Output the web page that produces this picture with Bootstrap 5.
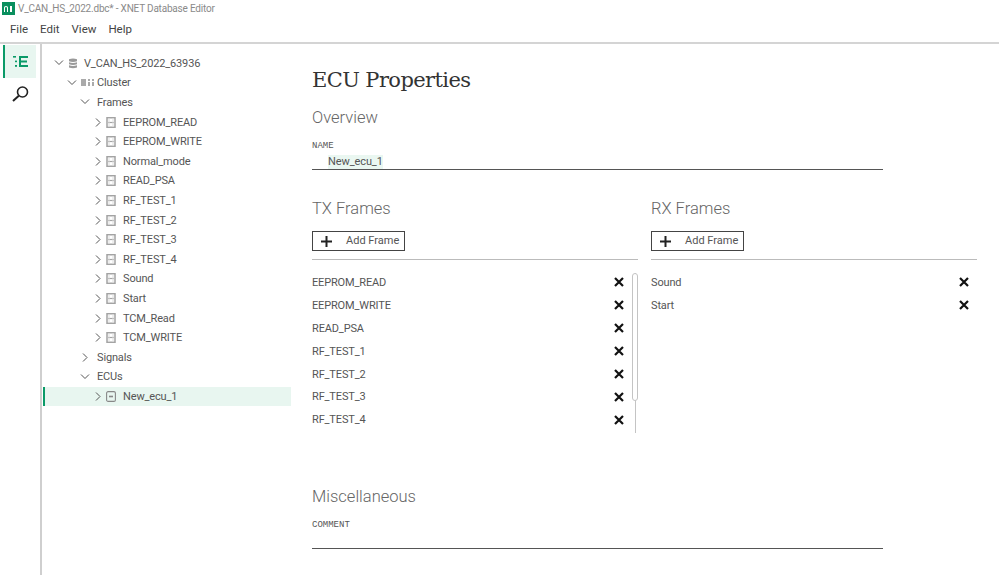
<!DOCTYPE html>
<html lang="en">
<head>
<meta charset="utf-8">
<title>XNET Database Editor</title>
<link href="https://cdn.jsdelivr.net/npm/bootstrap@5.3.0/dist/css/bootstrap.min.css" rel="stylesheet">
<style>
html,body{height:575px;overflow:hidden;background:#fff}
body{font-family:"Roboto","Noto Sans",sans-serif;font-size:12px;color:#333;line-height:1}
.titlebar{height:16px;padding-left:2px;color:#8a8a8a;font-size:10px;letter-spacing:-.2px;gap:3px}
.titlebar span{padding-top:1px}
.ni-logo{width:13px;height:13px;background:#0a8f5e}
.menubar{border-bottom:2px solid #d4d4d4;height:28px;padding:2px 0 0 10px;gap:12px;font-size:11.5px;color:#444}
.workspace{height:531px}
.rail{width:42px;border-right:2px solid #cfcfcf;padding:1px 0 0 3px}
.railtab{width:33px;height:33px;border-left:2px solid #0a9a68}
.railtab.on{background:#e8f6f0}
.railtab.off{border-left-color:transparent;padding-bottom:2px}
.treepane{width:249px;padding:9.5px 0 0 1px}
.tree-row{height:19.6px;color:#555;font-size:11px;letter-spacing:-.15px;white-space:nowrap}
.tree-row.sel{background:#e8f6f0;box-shadow:inset 2px 0 0 #0a9a68}
.caret{width:10px;flex:none;margin-right:4px}
.lv0{padding-left:11px}.lv1{padding-left:24px}.lv2{padding-left:37px}.lv3{padding-left:50px}
.lv3 .caret{margin-right:3px}
.ico{flex:none;margin-right:7px}
.ico.wide{margin-right:3px}
.lv0 .ico{margin-right:6px}
.lv2 .caret{margin-right:7px}
.main{padding:0 0 0 21px;width:708px}
.page-h{font-family:"DejaVu Serif","Liberation Serif",serif;font-size:21px;letter-spacing:-.6px;color:#333;margin:23px 0 0;line-height:27px;font-weight:400}
.sec-h{font-family:"Roboto",sans-serif;font-weight:300;font-size:16.5px;color:#666;line-height:22px;margin:0}
.sec-first{margin-top:13px}
.fieldlabel{font-family:"Liberation Mono",monospace;font-size:9px;color:#555;line-height:10px}
.lbl-name{margin-top:12px}
.lbl-comment{margin-top:12px}
.namefield{width:571px;border-bottom:1.5px solid #555;height:15px;padding-left:16px;margin-top:4px;font-size:11px;letter-spacing:-.1px}
.namefield span{background:#eaf7f1;display:inline-block;line-height:14px;color:#555}
.cols{gap:13px;width:666px;margin-top:28px}
.framecol{width:326px}
.addbtn{width:93px;height:20px;border:1px solid #444;border-radius:0;background:#fff;padding:0 0 0 8px;font-size:11px;color:#555;margin-top:11px;gap:14px}
.rule{border-top:1px solid #bbb;margin-top:8px;height:0}
.flist{margin-top:11px;height:164px;position:relative}
.frow{height:22.9px;padding-right:14px;color:#555;font-size:11px;letter-spacing:-.15px}
.rxlist .frow{padding-right:8px}
.sbar{position:absolute;right:0;top:2px;width:6px;height:128px;border:1px solid #c4c4c4;border-radius:3px;background:#fff}
.strack{position:absolute;right:2.5px;top:2px;width:1px;height:160px;background:#c4c4c4}
.misc{margin-top:51px}
.commentline{width:571px;border-bottom:1px solid #555;height:19px}
</style>
</head>
<body>
<div class="titlebar d-flex align-items-center">
  <div class="ni-logo d-flex align-items-center justify-content-center">
    <svg width="9" height="7" viewBox="0 0 9 7"><path d="M0 7V2.5Q0 1 2 1Q4 1 4 2.5V7H3V3Q3 2 2 2Q1 2 1 3V7ZM6 1H8V7H6Z" fill="#fff"/></svg>
  </div>
  <span>V_CAN_HS_2022.dbc* - XNET Database Editor</span>
</div>
<div class="menubar d-flex align-items-center"><span>File</span><span>Edit</span><span>View</span><span>Help</span></div>
<div class="workspace d-flex">
  <div class="rail">
    <div class="railtab on d-flex align-items-center justify-content-center">
      <svg width="15" height="11" viewBox="0 0 15 11" fill="#0a9a68"><rect x="0" y="0" width="3" height="1.6"/><rect x="2" y="4.6" width="2" height="1.6"/><rect x="2" y="9" width="2" height="1.8"/><path d="M6 0H15V2H8V4.5H14V6.5H8V9H15V11H6Z"/></svg>
    </div>
    <div class="railtab off d-flex align-items-center justify-content-center">
      <svg width="17" height="16" viewBox="0 0 17 16" fill="none" stroke="#222" stroke-width="1.6"><circle cx="10.5" cy="6" r="5"/><path d="M6.8 9.8L1 15" stroke-width="2"/></svg>
    </div>
  </div>
  <div class="treepane" id="tree"></div>
  <div class="main">
    <h1 class="page-h">ECU Properties</h1>
    <h2 class="sec-h sec-first">Overview</h2>
    <div class="fieldlabel lbl-name">NAME</div>
    <div class="namefield"><span>New_ecu_1</span></div>
    <div class="cols d-flex">
      <div class="framecol">
        <h2 class="sec-h">TX Frames</h2>
        <button class="addbtn btn d-flex align-items-center" type="button"><svg width="11" height="11" viewBox="0 0 11 11"><path d="M5.5 0V11M0 5.5H11" stroke="#222" stroke-width="2"/></svg>Add Frame</button>
        <div class="rule"></div>
        <div class="flist" id="tx"><div class="strack"></div><div class="sbar"></div></div>
      </div>
      <div class="framecol">
        <h2 class="sec-h">RX Frames</h2>
        <button class="addbtn btn d-flex align-items-center" type="button"><svg width="11" height="11" viewBox="0 0 11 11"><path d="M5.5 0V11M0 5.5H11" stroke="#222" stroke-width="2"/></svg>Add Frame</button>
        <div class="rule"></div>
        <div class="flist rxlist" id="rx"></div>
      </div>
    </div>
    <h2 class="sec-h misc">Miscellaneous</h2>
    <div class="fieldlabel lbl-comment">COMMENT</div>
    <div class="commentline"></div>
  </div>
</div>
<script>
const open='<svg class="caret" width="9" height="6" viewBox="0 0 9 6" fill="none" stroke="#555" stroke-width="1"><path d="M.5 .5L4.5 4.5L8.5 .5"/></svg>';
const shut='<svg class="caret" width="9" height="9" viewBox="0 0 10 9" fill="none" stroke="#555" stroke-width="1"><path d="M3 .5L7 4.5L3 8.5"/></svg>';
const film='<svg class="ico" width="10" height="11" viewBox="0 0 10 11" fill="none" stroke="#a3a3a3"><rect x="1" y=".75" width="8" height="9.5" stroke-width="1.5"/><path d="M2 5.5H8" stroke-width="1.2"/><path d="M3 1V10M7 1V10" stroke="#ddd" stroke-width="1"/></svg>';
const db='<svg class="ico" width="10" height="11" viewBox="0 0 10 11" fill="#999"><path d="M1 1.2Q5 -.4 9 1.2V3.2Q5 4.6 1 3.2ZM1 4.2Q5 5.6 9 4.2V6.2Q5 7.6 1 6.2ZM1 7.2Q5 8.6 9 7.2V9.4Q5 11 1 9.4Z"/></svg>';
const clu='<svg class="ico wide" width="13" height="7" viewBox="0 0 13 7" fill="#aaa"><rect width="5" height="7"/><rect x="7" width="2" height="2"/><rect x="11" width="2" height="2"/><rect x="7" y="3" width="2" height="4"/><rect x="11" y="3" width="2" height="4"/></svg>';
const ecu='<svg class="ico" width="10" height="11" viewBox="0 0 10 11" fill="none" stroke="#888" stroke-width="1.1"><rect x=".6" y=".6" width="8.8" height="9.8" rx="1.5"/><path d="M3 5.5H7" stroke-width="1.6"/></svg>';
const T=[[0,open,db,'V_CAN_HS_2022_63936'],[1,open,clu,'Cluster'],[2,open,'','Frames']];
['EEPROM_READ','EEPROM_WRITE','Normal_mode','READ_PSA','RF_TEST_1','RF_TEST_2','RF_TEST_3','RF_TEST_4','Sound','Start','TCM_Read','TCM_WRITE'].forEach(n=>T.push([3,shut,film,n]));
T.push([2,shut,'','Signals'],[2,open,'','ECUs'],[3,shut,ecu,'New_ecu_1']);
document.getElementById('tree').innerHTML=T.map((r,i)=>`<div class="tree-row d-flex align-items-center lv${r[0]}${i===T.length-1?' sel':''}">${r[1]}${r[2]}<span>${r[3]}</span></div>`).join('');
const X='<svg width="10" height="10" viewBox="0 0 10 10"><path d="M1 1L9 9M9 1L1 9" stroke="#111" stroke-width="2.2"/></svg>';
const row=n=>`<div class="frow d-flex align-items-center justify-content-between"><span>${n}</span>${X}</div>`;
document.getElementById('tx').insertAdjacentHTML('beforeend',['EEPROM_READ','EEPROM_WRITE','READ_PSA','RF_TEST_1','RF_TEST_2','RF_TEST_3','RF_TEST_4'].map(row).join(''));
document.getElementById('rx').innerHTML=['Sound','Start'].map(row).join('');
</script>
<script src="https://cdn.jsdelivr.net/npm/bootstrap@5.3.0/dist/js/bootstrap.bundle.min.js"></script>
</body>
</html>
